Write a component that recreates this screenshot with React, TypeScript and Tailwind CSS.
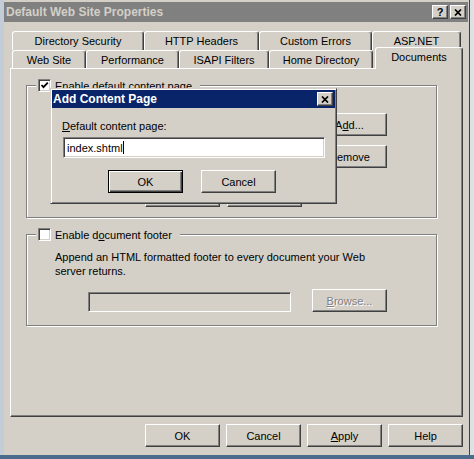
import React from 'react'

// classic 3d bevels
const raised =
  'border border-t-white border-l-white border-r-[#404040] border-b-[#404040] shadow-[inset_-1px_-1px_0_#808080]'
const sunken =
  'border border-t-[#808080] border-l-[#808080] border-r-white border-b-white shadow-[inset_1px_1px_0_#404040,inset_-1px_-1px_0_#d4d0c8]'
const etched = 'border border-[#808080] shadow-[inset_1px_1px_0_#fff,1px_1px_0_#fff]'

const backTabs = [
  { label: 'Directory Security', w: 'w-[132px]' },
  { label: 'HTTP Headers', w: 'w-[115px]' },
  { label: 'Custom Errors', w: 'w-[113px]' },
  { label: 'ASP.NET', w: 'w-[89px]' },
]

const frontTabs = [
  { label: 'Web Site', w: 'w-[74px]' },
  { label: 'Performance', w: 'w-[93px]' },
  { label: 'ISAPI Filters', w: 'w-[90px]' },
  { label: 'Home Directory', w: 'w-[104px]' },
]

function Button({
  children,
  className = '',
  disabled = false,
  isDefault = false,
}: {
  children: React.ReactNode
  className?: string
  disabled?: boolean
  isDefault?: boolean
}) {
  const bevel = isDefault
    ? 'border border-black shadow-[inset_1px_1px_0_#fff,inset_-1px_-1px_0_#404040,inset_-2px_-2px_0_#808080]'
    : raised
  return (
    <button
      type="button"
      className={`h-[23px] w-[75px] shrink-0 flex items-center justify-center bg-[#d4d0c8] ${bevel} ${
        disabled ? 'text-[#808080] [text-shadow:1px_1px_0_#fff]' : 'text-black'
      } ${className}`}
    >
      {children}
    </button>
  )
}

function CloseGlyph() {
  return (
    <svg width="8" height="7" viewBox="0 0 8 7">
      <path d="M1 0.5 L7 6.5 M7 0.5 L1 6.5" stroke="black" strokeWidth="1.7" />
    </svg>
  )
}

function CaptionButton({ children, className = '' }: { children: React.ReactNode; className?: string }) {
  return (
    <div className={`w-[16px] h-[14px] flex items-center justify-center bg-[#d4d0c8] ${raised} ${className}`}>
      {children}
    </div>
  )
}

function CheckBox({ checked = false }: { checked?: boolean }) {
  return (
    <div className={`w-[13px] h-[13px] shrink-0 bg-white flex items-center justify-center ${sunken}`}>
      {checked && (
        <svg width="9" height="9" viewBox="0 0 9 9">
          <polyline points="1.5,4 3.5,6.2 7.8,1.6" fill="none" stroke="black" strokeWidth="1.8" />
        </svg>
      )}
    </div>
  )
}

function AddContentPage() {
  return (
    <div className="absolute left-[50px] top-[88px] z-20 w-[287px] h-[116px] p-[1px] flex flex-col bg-[#d4d0c8] border border-t-[#d4d0c8] border-l-[#d4d0c8] border-r-[#404040] border-b-[#404040] shadow-[inset_1px_1px_0_#fff,inset_-1px_-1px_0_#808080]">
      <div className="h-[18px] bg-[#0a246a] flex items-center pl-[1px] pr-[2px]">
        <span className="flex-1 text-[12px] font-bold text-white">Add Content Page</span>
        <CaptionButton>
          <CloseGlyph />
        </CaptionButton>
      </div>
      <div className="pl-[10px] pt-[11px]">
        <div>
          <u>D</u>efault content page:
        </div>
        <div className={`mt-[4px] ml-[1px] w-[262px] h-[21px] bg-white pl-[3px] flex items-center ${sunken}`}>
          <span>index.shtml</span>
          <span className="inline-block w-[1px] h-[13px] bg-black" />
        </div>
        <div className="mt-[12px] ml-[46px] flex gap-[18px]">
          <Button isDefault>OK</Button>
          <Button>Cancel</Button>
        </div>
      </div>
    </div>
  )
}

export default function App() {
  return (
    <div className="relative w-[474px] h-[459px] overflow-hidden bg-[#d4d0c8] font-['Liberation_Sans',Arial,sans-serif] text-[11px] leading-[14px] text-black select-none">
      <div className="flex h-[455px]">
        <div className="w-[4px] bg-[#c3cdd7]" />

        {/* Properties window */}
        <div className="w-[465px] flex flex-col pt-[2px]">
          <div className="h-[20px] mr-[1px] bg-[#808080] flex items-center pl-[2px] pr-[2px]">
            <span className="flex-1 text-[12px] font-bold text-[#d4d0c8]">Default Web Site Properties</span>
            <CaptionButton>
              <span className="text-[11px] font-bold leading-none">?</span>
            </CaptionButton>
            <CaptionButton className="ml-[2px]">
              <CloseGlyph />
            </CaptionButton>
          </div>

          {/* Tabs */}
          <div className="mt-[9px] pl-[8px]">
            <div className="flex h-[19px]">
              {backTabs.map((t) => (
                <div
                  key={t.label}
                  className={`${t.w} h-[19px] flex items-center justify-center rounded-t-[3px] border-t border-l border-r border-t-white border-l-white border-r-[#404040] shadow-[inset_-1px_0_0_#808080]`}
                >
                  {t.label}
                </div>
              ))}
            </div>
            <div className="flex h-[18px] items-end">
              {frontTabs.map((t) => (
                <div
                  key={t.label}
                  className={`${t.w} h-[18px] flex items-center justify-center rounded-t-[3px] border-t border-l border-r border-t-white border-l-white border-r-[#404040] shadow-[inset_-1px_0_0_#808080]`}
                >
                  {t.label}
                </div>
              ))}
              <div className="relative z-10 ml-[2px] mb-[-1px] w-[88px] h-[22px] pb-[3px] flex items-center justify-center bg-[#d4d0c8] rounded-t-[3px] border-t border-l border-r border-t-white border-l-white border-r-[#404040] shadow-[inset_-1px_0_0_#808080]">
                Documents
              </div>
            </div>
          </div>

          {/* Documents page */}
          <div className={`ml-[6px] w-[453px] h-[349px] pt-[10px] pl-[15px] bg-[#d4d0c8] ${raised}`}>
            <fieldset className={`w-[411px] ${etched}`}>
              <legend className="ml-[9px] pl-[2px] pr-[8px] h-[13px] flex items-center gap-[4px] bg-[#d4d0c8]">
                <CheckBox checked />
                <span>Enable default content page</span>
              </legend>
              <div className="flex pl-[28px] pb-[10px]">
                <div className="w-[247px] pt-[8px]">
                  <div className={`h-[78px] bg-white ${sunken}`} />
                  <div className="mt-[6px] flex justify-end gap-[7px]">
                    <Button>Move Up</Button>
                    <Button>Move Down</Button>
                  </div>
                </div>
                <div className="ml-[10px] pt-[21px] flex flex-col gap-[9px]">
                  <Button>
                    A<u>d</u>d...
                  </Button>
                  <Button>Remove</Button>
                </div>
              </div>
            </fieldset>

            <fieldset className={`mt-[10px] w-[411px] ${etched}`}>
              <legend className="ml-[9px] pl-[2px] pr-[8px] h-[13px] flex items-center gap-[4px] bg-[#d4d0c8]">
                <CheckBox />
                <span>
                  Enable d<u>o</u>cument footer
                </span>
              </legend>
              <div className="pl-[28px] pt-[9px] pb-[13px]">
                <p>
                  Append an HTML formatted footer to every document your Web
                  <br />
                  server returns.
                </p>
                <div className="mt-[11px] flex items-end">
                  <div className={`ml-[33px] w-[203px] h-[20px] bg-[#d4d0c8] ${sunken}`} />
                  <Button disabled className="ml-[21px]">
                    <span>
                      <u>B</u>rowse...
                    </span>
                  </Button>
                </div>
              </div>
            </fieldset>
          </div>

          <div className="mt-[7px] pr-[6px] flex justify-end gap-[6px]">
            <Button>OK</Button>
            <Button>Cancel</Button>
            <Button>
              <span>
                <u>A</u>pply
              </span>
            </Button>
            <Button>Help</Button>
          </div>
        </div>

        <div className="w-[1px] bg-[#404040]" />
        <div className="flex-1 bg-[#dde1e6]" />
      </div>
      <div className="h-[4px] bg-[#4a6b8c]" />

      <AddContentPage />
    </div>
  )
}
